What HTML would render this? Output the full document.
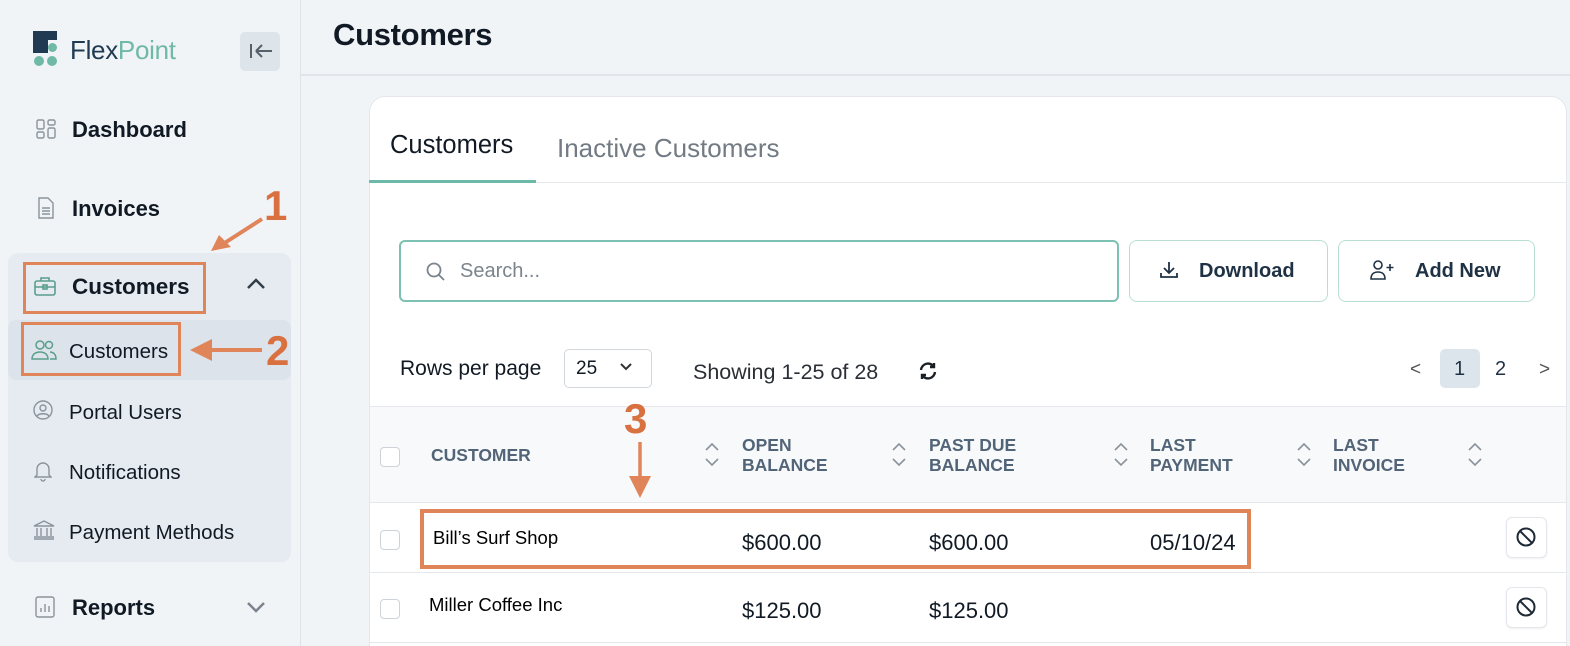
<!DOCTYPE html>
<html><head><meta charset="utf-8"><style>
*{box-sizing:border-box;margin:0;padding:0}
html,body{width:1570px;height:646px;overflow:hidden}
body{background:#f0f4f7;font-family:"Liberation Sans",Arial,sans-serif;color:#111a24;position:relative}
.a{position:absolute}
.sb{left:0;top:0;width:301px;height:646px;border-right:1px solid #dfe3e8;background:#f0f4f7}
.b{font-weight:bold}
.orange{color:#d9703f;font-weight:bold;font-size:42px}
.hd{color:#526477;font-weight:bold;font-size:17.5px;line-height:20px}
.chk{width:20px;height:20px;border:1.5px solid #cdd3d9;border-radius:4px;background:#fff}
.ban{width:41px;height:41px;border:1px solid #e3e6ea;border-radius:6px;background:#fff;box-shadow:0 1px 2px rgba(0,0,0,.06)}
.sub{font-size:20.5px}
</style></head><body>
<div class="a sb"></div>
<div class="a" style="left:33px;top:31px;width:15px;height:22px;background:#1f3a52"></div>
<div class="a" style="left:48px;top:31px;width:9px;height:9px;background:#1f3a52"></div>
<div class="a" style="left:48px;top:43px;width:9px;height:9px;border-radius:50%;background:#6fb9a6"></div>
<div class="a" style="left:34px;top:56px;width:10px;height:10px;border-radius:50%;background:#6fb9a6"></div>
<div class="a" style="left:47px;top:56px;width:10px;height:10px;border-radius:50%;background:#6fb9a6"></div>
<div class="a" style="left:70px;top:35px;font-size:26px;color:#1f3a52;letter-spacing:-0.3px">Flex<span style="color:#6fb9a6">Point</span></div>
<div class="a" style="left:240px;top:32px;width:40px;height:39px;background:#dde4ea;border-radius:5px"></div>
<svg class="a" style="left:248px;top:41px" width="26" height="20" viewBox="0 0 26 20"><path d="M3 3v14M8 10h16M8 10l6-6M8 10l6 6" stroke="#55606b" stroke-width="2" fill="none"/></svg>
<svg class="a" style="left:36px;top:119px" width="20" height="20" viewBox="0 0 20 20" fill="none" stroke="#8a939c" stroke-width="1.4"><rect x="1" y="1" width="7" height="9" rx="1.5"/><rect x="12" y="1" width="7" height="5" rx="1.5"/><rect x="1" y="13" width="7" height="6" rx="1.5"/><rect x="12" y="9" width="7" height="10" rx="1.5"/></svg>
<div class="a b" style="left:72px;top:117px;font-size:22px">Dashboard</div>
<svg class="a" style="left:37px;top:196px" width="18" height="24" viewBox="0 0 18 24" fill="none" stroke="#8a939c" stroke-width="1.4"><path d="M2 2h9l5 5v15H2z"/><path d="M5 12h8M5 15h8M5 18h8"/></svg>
<div class="a b" style="left:72px;top:196px;font-size:22px">Invoices</div>
<div class="a" style="left:8px;top:253px;width:283px;height:309px;background:#e6ebf2;border-radius:10px"></div>
<div class="a" style="left:8px;top:320px;width:283px;height:60px;background:#dce3eb;border-radius:8px"></div>
<svg class="a" style="left:34px;top:276px" width="22" height="20" viewBox="0 0 22 20" fill="none" stroke="#5a9e8c" stroke-width="1.6"><rect x="1" y="5" width="20" height="14" rx="2"/><path d="M7 5V2h8v3M1 11h20"/><rect x="9" y="9" width="4" height="4"/></svg>
<div class="a b" style="left:72px;top:274px;font-size:22.5px">Customers</div>
<svg class="a" style="left:245px;top:277px" width="22" height="14" viewBox="0 0 22 14"><path d="M3 11l8-8 8 8" stroke="#333d47" stroke-width="2.5" fill="none"/></svg>
<svg class="a" style="left:31px;top:339px" width="26" height="22" viewBox="0 0 26 22" fill="none" stroke="#5a9e8c" stroke-width="1.5"><circle cx="9" cy="6" r="4"/><path d="M1 20c0-5 4-7 8-7s8 2 8 7z"/><circle cx="18" cy="6" r="3.5"/><path d="M19 13c3 0 6 2 6 7h-6"/></svg>
<div class="a sub" style="left:69px;top:340px">Customers</div>
<svg class="a" style="left:33px;top:400px" width="20" height="20" viewBox="0 0 20 20" fill="none" stroke="#8a939c" stroke-width="1.4"><circle cx="10" cy="10" r="9"/><circle cx="10" cy="8" r="3"/><path d="M4 16c2-3 10-3 12 0"/></svg>
<div class="a sub" style="left:69px;top:401px">Portal Users</div>
<svg class="a" style="left:34px;top:460px" width="18" height="22" viewBox="0 0 18 22" fill="none" stroke="#8a939c" stroke-width="1.4"><path d="M3 15V9a6 6 0 0112 0v6l2 2H1z"/><path d="M7 19a2 2 0 004 0"/></svg>
<div class="a sub" style="left:69px;top:461px">Notifications</div>
<svg class="a" style="left:33px;top:520px" width="22" height="20" viewBox="0 0 22 20" fill="none" stroke="#8a939c" stroke-width="1.4"><path d="M1 6L11 1l10 5z"/><path d="M4 8v8M8 8v8M14 8v8M18 8v8M1 17h20M1 19h20"/></svg>
<div class="a sub" style="left:69px;top:521px">Payment Methods</div>
<svg class="a" style="left:35px;top:596px" width="20" height="22" viewBox="0 0 20 22" fill="none" stroke="#8a939c" stroke-width="1.4"><rect x="1" y="1" width="18" height="20" rx="2"/><path d="M6 16v-4M10 16V8M14 16v-6"/></svg>
<div class="a b" style="left:72px;top:595px;font-size:22px">Reports</div>
<svg class="a" style="left:245px;top:600px" width="22" height="14" viewBox="0 0 22 14"><path d="M3 3l8 8 8-8" stroke="#7b848d" stroke-width="2.5" fill="none"/></svg>
<div class="a" style="left:23px;top:262px;width:183px;height:52px;border:3px solid #e0855a"></div>
<div class="a" style="left:21px;top:322px;width:160px;height:54px;border:3px solid #e0855a"></div>
<div class="a orange" style="left:264px;top:182px">1</div>
<svg class="a" style="left:205px;top:215px" width="60" height="40" viewBox="0 0 60 40"><path d="M57 4L18 29" stroke="#e0855a" stroke-width="4"/><path d="M6 36l8-16 12 12z" fill="#e0855a"/></svg>
<div class="a orange" style="left:266px;top:327px">2</div>
<svg class="a" style="left:188px;top:338px" width="76" height="24" viewBox="0 0 76 24"><path d="M74 12H20" stroke="#e0855a" stroke-width="4"/><path d="M2 12l22-11v22z" fill="#e0855a"/></svg>
<div class="a" style="left:301px;top:74px;width:1269px;height:2px;background:#e1e5ea"></div>
<div class="a b" style="left:333px;top:17px;font-size:31px;letter-spacing:-0.3px">Customers</div>
<div class="a" style="left:369px;top:96px;width:1198px;height:550px;background:#fff;border:1px solid #e4e7eb;border-bottom:none;border-radius:16px 16px 0 0"></div>
<div class="a" style="left:390px;top:131px;font-size:25.5px;color:#111a24">Customers</div>
<div class="a" style="left:557px;top:133px;font-size:26px;color:#727b84">Inactive Customers</div>
<div class="a" style="left:370px;top:182px;width:1196px;height:1px;background:#e6e8eb"></div>
<div class="a" style="left:369px;top:180px;width:167px;height:3px;background:#6db9a8"></div>
<div class="a" style="left:399px;top:240px;width:720px;height:62px;border:2px solid #7cc1b1;border-radius:6px"></div>
<svg class="a" style="left:426px;top:262px" width="20" height="20" viewBox="0 0 20 20" fill="none" stroke="#7b848d" stroke-width="1.8"><circle cx="8" cy="8" r="6.5"/><path d="M13 13l5 5"/></svg>
<div class="a" style="left:460px;top:260px;font-size:20px;color:#7b848d">Search...</div>
<div class="a" style="left:1129px;top:240px;width:199px;height:62px;border:1.5px solid #b9dfd5;border-radius:8px"></div>
<svg class="a" style="left:1159px;top:260px" width="20" height="20" viewBox="0 0 20 20" fill="none" stroke="#1f3245" stroke-width="1.8"><path d="M10 2v11M5 8l5 5 5-5M2 13v4h16v-4"/></svg>
<div class="a b" style="left:1199px;top:260px;font-size:20px;color:#1f3245">Download</div>
<div class="a" style="left:1338px;top:240px;width:197px;height:62px;border:1.5px solid #b9dfd5;border-radius:8px"></div>
<svg class="a" style="left:1370px;top:259px" width="26" height="22" viewBox="0 0 26 22" fill="none" stroke="#1f3245" stroke-width="1.6"><circle cx="8" cy="6" r="4"/><path d="M1 20c0-5 3-7 7-7s7 2 7 7z"/><path d="M20 5v7M16.5 8.5h7"/></svg>
<div class="a b" style="left:1415px;top:260px;font-size:20px;color:#1f3245">Add New</div>
<div class="a" style="left:400px;top:357px;font-size:21px">Rows per page</div>
<div class="a" style="left:564px;top:349px;width:88px;height:39px;border:1.5px solid #d2d7dc;border-radius:5px"></div>
<div class="a" style="left:576px;top:358px;font-size:19px">25</div>
<svg class="a" style="left:619px;top:362px" width="14" height="10" viewBox="0 0 14 10"><path d="M2 2l5 5 5-5" stroke="#333" stroke-width="2" fill="none"/></svg>
<div class="a" style="left:693px;top:360px;font-size:21.5px;color:#2a2f35">Showing 1-25 of 28</div>
<svg class="a" style="left:918px;top:361px" width="20" height="20" viewBox="0 0 20 20" fill="none" stroke="#1a1f24" stroke-width="2.4"><path d="M3 9a7 7 0 0113-3M17 11a7 7 0 01-13 3"/><path d="M16 2v4h-4M4 18v-4h4"/></svg>
<div class="a" style="left:1410px;top:359px;font-size:19px;color:#555">&lt;</div>
<div class="a" style="left:1440px;top:349px;width:40px;height:39px;background:#dce5ec;border-radius:5px"></div>
<div class="a" style="left:1454px;top:358px;font-size:20px;color:#1f3245">1</div>
<div class="a" style="left:1495px;top:358px;font-size:20px;color:#1f3245">2</div>
<div class="a" style="left:1539px;top:359px;font-size:19px;color:#555">&gt;</div>
<div class="a" style="left:370px;top:406px;width:1196px;height:97px;background:#f8f9fa;border-top:1px solid #e6e8eb;border-bottom:1px solid #e6e8eb"></div>
<div class="a chk" style="left:380px;top:447px"></div>
<div class="a hd" style="left:431px;top:445px">CUSTOMER</div>
<div class="a hd" style="left:742px;top:435px">OPEN<br>BALANCE</div>
<div class="a hd" style="left:929px;top:435px">PAST DUE<br>BALANCE</div>
<div class="a hd" style="left:1150px;top:435px">LAST<br>PAYMENT</div>
<div class="a hd" style="left:1333px;top:435px">LAST<br>INVOICE</div>
<svg class="a" style="left:704px;top:442px" width="16" height="26" viewBox="0 0 16 26"><path d="M2 8l6-6 6 6M2 17l6 6 6-6" stroke="#8a939c" stroke-width="1.6" fill="none"/></svg>
<svg class="a" style="left:891px;top:442px" width="16" height="26" viewBox="0 0 16 26"><path d="M2 8l6-6 6 6M2 17l6 6 6-6" stroke="#8a939c" stroke-width="1.6" fill="none"/></svg>
<svg class="a" style="left:1113px;top:442px" width="16" height="26" viewBox="0 0 16 26"><path d="M2 8l6-6 6 6M2 17l6 6 6-6" stroke="#8a939c" stroke-width="1.6" fill="none"/></svg>
<svg class="a" style="left:1296px;top:442px" width="16" height="26" viewBox="0 0 16 26"><path d="M2 8l6-6 6 6M2 17l6 6 6-6" stroke="#8a939c" stroke-width="1.6" fill="none"/></svg>
<svg class="a" style="left:1467px;top:442px" width="16" height="26" viewBox="0 0 16 26"><path d="M2 8l6-6 6 6M2 17l6 6 6-6" stroke="#8a939c" stroke-width="1.6" fill="none"/></svg>
<div class="a" style="left:370px;top:572px;width:1196px;height:1px;background:#e6e8eb"></div>
<div class="a" style="left:370px;top:642px;width:1196px;height:1px;background:#e6e8eb"></div>
<div class="a chk" style="left:380px;top:530px"></div>
<div class="a" style="left:433px;top:527px;font-size:18.5px;color:#000">Bill’s Surf Shop</div>
<div class="a" style="left:742px;top:530px;font-size:22px">$600.00</div>
<div class="a" style="left:929px;top:530px;font-size:22px">$600.00</div>
<div class="a" style="left:1150px;top:530px;font-size:22px">05/10/24</div>
<div class="a ban" style="left:1506px;top:517px"></div>
<svg class="a" style="left:1515px;top:526px" width="22" height="22" viewBox="0 0 22 22" fill="none" stroke="#1f2a35" stroke-width="2"><circle cx="11" cy="11" r="8.5"/><path d="M5 5l12 12"/></svg>
<div class="a chk" style="left:380px;top:599px"></div>
<div class="a" style="left:429px;top:594px;font-size:18.5px;color:#000">Miller Coffee Inc</div>
<div class="a" style="left:742px;top:598px;font-size:22px">$125.00</div>
<div class="a" style="left:929px;top:598px;font-size:22px">$125.00</div>
<div class="a ban" style="left:1506px;top:587px"></div>
<svg class="a" style="left:1515px;top:596px" width="22" height="22" viewBox="0 0 22 22" fill="none" stroke="#1f2a35" stroke-width="2"><circle cx="11" cy="11" r="8.5"/><path d="M5 5l12 12"/></svg>
<div class="a" style="left:420px;top:509px;width:831px;height:60px;border:4px solid #e0855a"></div>
<div class="a orange" style="left:624px;top:395px">3</div>
<svg class="a" style="left:628px;top:442px" width="24" height="58" viewBox="0 0 24 58"><path d="M12 0v36" stroke="#e0855a" stroke-width="3.5"/><path d="M1 34h22L12 56z" fill="#e0855a"/></svg>
</body></html>
